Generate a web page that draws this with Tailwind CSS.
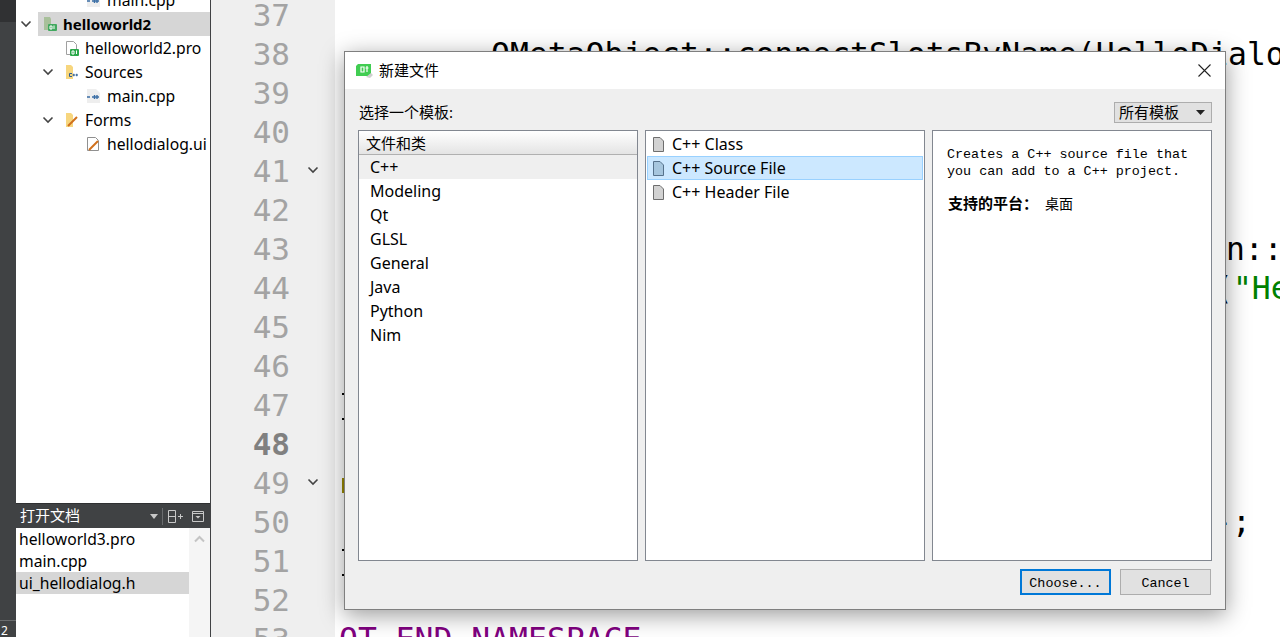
<!DOCTYPE html>
<html lang="en">
<head>
    <meta charset="UTF-8">
    <title>新建文件</title>
    <script src="https://cdn.jsdelivr.net/npm/@tailwindcss/browser@4"></script>
</head>
<body class="bg-white">
<div class="relative flex w-[1280px] h-[637px] overflow-hidden font-['Noto_Sans','Noto_Sans_CJK_SC',sans-serif] text-[15.7px] text-black">

    <!-- Mode bar -->
    <div class="w-4 flex flex-col bg-[#404244]">
        <div class="h-[22px] bg-[#303133]"></div>
        <div class="flex-1"></div>
        <div class="h-[17px] border-t border-[#6a6c6e] pl-[1px] text-[12px] leading-[20px] text-white">2</div>
    </div>

    <!-- Sidebar -->
    <div class="w-[195px] flex flex-col border-r border-[#404244] bg-white">
        <div class="flex-1 -mt-3">
            <div class="h-6 flex items-center pl-[70px]">
                <svg width="14" height="14" viewBox="0 0 14 14" class="mr-[7px]"><path d="M1 0h9l4 4v10H1z" fill="#eeeeee"/><path d="M1 8h3M6 8h7M8.500 6v4M11 6v4" stroke="#3b6ea5" stroke-width="1.400" fill="none"/></svg>
                <span class="pt-px">main.cpp</span>
            </div>
            <div class="h-6 flex items-center">
                <div class="w-[22px] flex justify-center pr-[2px]">
                    <svg width="12" height="8" viewBox="0 0 12 8"><path d="M1.500 1.500 6 6l4.500-4.500" stroke="#444" stroke-width="1.600" fill="none"/></svg>
                </div>
                <div class="flex-1 h-6 flex items-center bg-[#d6d6d6] pl-[5px] font-bold text-[15px]">
                    <svg width="16" height="16" viewBox="0 0 16 16" class="mr-1"><path d="M1 1h6l1 2v11H1z" fill="#a8c09a"/><rect x="5" y="8" width="9" height="7" rx="1" fill="#41a85f"/><path d="M7 10h2v3H7zM11 9.500v3.500" stroke="#fff" stroke-width="1" fill="none"/></svg>
                    <span class="pt-px">helloworld2</span>
                </div>
            </div>
            <div class="h-6 flex items-center pl-[49px]">
                <svg width="14" height="16" viewBox="0 0 14 16" class="mr-1.5"><path d="M1.500 1.500h7l3 3v10h-10z" fill="#fff" stroke="#a0a0a0"/><rect x="5" y="9" width="9" height="7" rx="1" fill="#2ba84a"/><path d="M7 11h2v3H7zM11.500 10.500v3.500" stroke="#fff" stroke-width="1" fill="none"/></svg>
                <span class="pt-px">helloworld2.pro</span>
            </div>
            <div class="h-6 flex items-center pl-[26px]">
                <div class="w-[23px] flex">
                    <svg width="12" height="8" viewBox="0 0 12 8"><path d="M1.500 1.500 6 6l4.500-4.500" stroke="#444" stroke-width="1.600" fill="none"/></svg>
                </div>
                <svg width="14" height="16" viewBox="0 0 14 16" class="mr-1.5"><path d="M1 1h5l2 2v12H1z" fill="#f7d67e"/><path d="M7 9.500H4.500v3H7M7.500 11h2.500M8.750 9.750v2.500M10.500 11H13M11.750 9.750v2.500" stroke="#2f5f96" stroke-width="1" fill="none"/></svg>
                <span class="pt-px">Sources</span>
            </div>
            <div class="h-6 flex items-center pl-[70px]">
                <svg width="14" height="14" viewBox="0 0 14 14" class="mr-[7px]"><path d="M1 0h9l4 4v10H1z" fill="#eeeeee"/><path d="M1 8h3M6 8h7M8.500 6v4M11 6v4" stroke="#3b6ea5" stroke-width="1.400" fill="none"/></svg>
                <span class="pt-px">main.cpp</span>
            </div>
            <div class="h-6 flex items-center pl-[26px]">
                <div class="w-[23px] flex">
                    <svg width="12" height="8" viewBox="0 0 12 8"><path d="M1.500 1.500 6 6l4.500-4.500" stroke="#444" stroke-width="1.600" fill="none"/></svg>
                </div>
                <svg width="14" height="16" viewBox="0 0 14 16" class="mr-1.5"><path d="M1 1h5l2 2v12H1z" fill="#f7d67e"/><path d="M3 14 12 5" stroke="#d0701c" stroke-width="2" fill="none"/></svg>
                <span class="pt-px">Forms</span>
            </div>
            <div class="h-6 flex items-center pl-[70px]">
                <svg width="14" height="16" viewBox="0 0 14 16" class="mr-[7px]"><path d="M1.500 1.500h8l3 3v10h-11z" fill="#fff" stroke="#909090"/><path d="M3 14 12 5" stroke="#d0701c" stroke-width="2" fill="none"/></svg>
                <span class="pt-px">hellodialog.ui</span>
            </div>
        </div>

        <!-- Open documents -->
        <div class="h-[134px] flex flex-col">
            <div class="h-[25px] flex items-center bg-[#404244] border-t border-[#2f3032] pl-1 text-white text-[15px]">
                <span class="flex-1 pb-[2px]">打开文档</span>
                <svg width="8" height="5" viewBox="0 0 8 5" class="mr-[4px]"><path d="M0 0h8L4 5z" fill="#c8c8c8"/></svg>
                <div class="w-px h-[17px] bg-[#6a6c6e] mr-[5px]"></div>
                <svg width="15" height="13" viewBox="0 0 15 13" class="mr-[9px]"><path d="M.5.500h7v12h-7zM.5 6.500h7M10 6.500h5M12.500 4v5" stroke="#c8c8c8" fill="none"/></svg>
                <svg width="12" height="11" viewBox="0 0 12 11" class="mr-[6px]"><path d="M.5.500h11v10H.5zM.5 2.500h11" stroke="#c8c8c8" fill="none"/><path d="M3.500 5h5L6 7.500z" fill="#c8c8c8"/></svg>
            </div>
            <div class="flex-1 flex bg-white">
                <div class="flex-1">
                    <div class="h-[22px] leading-[22px] pl-[3px]">helloworld3.pro</div>
                    <div class="h-[22px] leading-[22px] pl-[3px]">main.cpp</div>
                    <div class="h-[22px] leading-[22px] pl-[3px] bg-[#d6d6d6]">ui_hellodialog.h</div>
                </div>
                <div class="w-[21px] bg-[#f5f5f5] flex justify-center pt-[7px]">
                    <svg width="11" height="8" viewBox="0 0 11 8"><path d="M1 6.500 5.500 2 10 6.500" stroke="#c4c4c4" stroke-width="2" fill="none"/></svg>
                </div>
            </div>
        </div>
    </div>

    <!-- Line numbers -->
    <div class="w-[124px] bg-[#efefef] -mt-1 h-[680px] font-['DejaVu_Sans_Mono',monospace] text-[31px] leading-[39px] text-[#a3a3a3]">
        <div class="h-[39px] flex justify-end"><span>37</span><div class="w-[45px]"></div></div>
        <div class="h-[39px] flex justify-end"><span>38</span><div class="w-[45px]"></div></div>
        <div class="h-[39px] flex justify-end"><span>39</span><div class="w-[45px]"></div></div>
        <div class="h-[39px] flex justify-end"><span>40</span><div class="w-[45px]"></div></div>
        <div class="h-[39px] flex justify-end"><span>41</span><div class="w-[45px] flex items-center justify-center pb-[3px]"><svg width="12" height="8" viewBox="0 0 12 8"><path d="M1.500 1.500 6 6l4.500-4.500" stroke="#444" stroke-width="1.600" fill="none"/></svg></div></div>
        <div class="h-[39px] flex justify-end"><span>42</span><div class="w-[45px]"></div></div>
        <div class="h-[39px] flex justify-end"><span>43</span><div class="w-[45px]"></div></div>
        <div class="h-[39px] flex justify-end"><span>44</span><div class="w-[45px]"></div></div>
        <div class="h-[39px] flex justify-end"><span>45</span><div class="w-[45px]"></div></div>
        <div class="h-[39px] flex justify-end"><span>46</span><div class="w-[45px]"></div></div>
        <div class="h-[39px] flex justify-end"><span>47</span><div class="w-[45px]"></div></div>
        <div class="h-[39px] flex justify-end"><span class="font-bold text-[#808080]">48</span><div class="w-[45px]"></div></div>
        <div class="h-[39px] flex justify-end"><span>49</span><div class="w-[45px] flex items-center justify-center pb-[3px]"><svg width="12" height="8" viewBox="0 0 12 8"><path d="M1.500 1.500 6 6l4.500-4.500" stroke="#444" stroke-width="1.600" fill="none"/></svg></div></div>
        <div class="h-[39px] flex justify-end"><span>50</span><div class="w-[45px]"></div></div>
        <div class="h-[39px] flex justify-end"><span>51</span><div class="w-[45px]"></div></div>
        <div class="h-[39px] flex justify-end"><span>52</span><div class="w-[45px]"></div></div>
        <div class="h-[39px] flex justify-end"><span>53</span><div class="w-[45px]"></div></div>
    </div>

    <!-- Editor -->
    <div class="flex-1 min-w-0 -mt-1 h-[680px] overflow-hidden bg-white font-['DejaVu_Sans_Mono',monospace] text-[31.4px] leading-[39px]">
        <div class="h-[39px]"></div>
        <div class="h-[39px] pl-[156px] whitespace-pre">QMetaObject::connectSlotsByName(HelloDialog);</div>
        <div class="h-[156px]"></div>
        <div class="h-[39px] pl-[872px] whitespace-pre">on::</div>
        <div class="h-[39px] pl-[879px] whitespace-pre">(<span class="text-[#008000]">"Hello</span></div>
        <div class="h-[78px]"></div>
        <div class="h-[39px] pl-[7px] pt-[7px]">
            <div class="w-[2px] h-[2px] bg-black"></div>
            <div class="w-[2px] h-[2px] bg-black mt-[23px]"></div>
        </div>
        <div class="h-[39px]"></div>
        <div class="h-[39px] pl-[7px] pt-[14px]"><div class="w-[3px] h-[15px] bg-[#9b8a00]"></div></div>
        <div class="h-[39px] pl-[878px] whitespace-pre">-;</div>
        <div class="h-[39px] pl-[7px] pt-[7px]">
            <div class="w-[2px] h-[2px] bg-black"></div>
            <div class="w-[2px] h-[2px] bg-black mt-[23px]"></div>
        </div>
        <div class="h-[39px]"></div>
        <div class="h-[39px] pl-[4px] text-[#800080] whitespace-pre">QT_END_NAMESPACE</div>
    </div>

    <!-- New file dialog -->
    <div class="absolute left-[344px] top-[51px] w-[882px] h-[559px] flex flex-col border border-[#7f7f7f] bg-[#efefef] shadow-[0_5px_22px_rgba(0,0,0,0.4)]">
        <div class="h-[37px] flex items-center bg-white pl-[11px] pr-[14px] text-[15px]">
            <svg width="17" height="15" viewBox="0 0 17 15" class="mr-[6px]">
                <path d="M2 1h13v10l-2 2H0V3z" fill="#41cd52"/>
                <path d="M5 4h3v5H5zM11 3v6M9.500 5h3" stroke="#fff" stroke-width="1.200" fill="none"/>
                <path d="M10 14l5-4 2 2-3 3z" fill="#cfcfcf"/>
            </svg>
            <span class="flex-1">新建文件</span>
            <svg width="13" height="13" viewBox="0 0 13 13"><path d="M.5.500l12 12M12.500.500l-12 12" stroke="#222" stroke-width="1.100" fill="none"/></svg>
        </div>
        <div class="flex-1 flex flex-col pt-[13px] pl-[13px] pr-[13px] text-[15px]">
            <div class="h-[21px] flex items-center justify-between">
                <span class="pl-px">选择一个模板:</span>
                <div class="w-[98px] h-[21px] flex items-center justify-between bg-[#e1e1e1] border border-[#adadad] pl-1 pr-[6px]">
                    <span>所有模板</span>
                    <svg width="9" height="5" viewBox="0 0 9 5"><path d="M0 0h9L4.500 5z" fill="#222"/></svg>
                </div>
            </div>
            <div class="mt-[7px] h-[431px] flex gap-[7px]">
                <div class="w-[280px] border border-[#828790] bg-white text-[16px]">
                    <div class="h-6 flex items-center pl-[7px] pt-px text-[15px] bg-gradient-to-b from-white to-[#e4e4e4] border-b border-[#b0b0b0]">文件和类</div>
                    <div class="h-6 flex items-center pl-[11px] bg-[#efefef]">C++</div>
                    <div class="h-6 flex items-center pl-[11px]">Modeling</div>
                    <div class="h-6 flex items-center pl-[11px]">Qt</div>
                    <div class="h-6 flex items-center pl-[11px]">GLSL</div>
                    <div class="h-6 flex items-center pl-[11px]">General</div>
                    <div class="h-6 flex items-center pl-[11px]">Java</div>
                    <div class="h-6 flex items-center pl-[11px]">Python</div>
                    <div class="h-6 flex items-center pl-[11px]">Nim</div>
                </div>
                <div class="w-[280px] border border-[#828790] bg-white pt-px px-px text-[16px]">
                    <div class="h-6 flex items-center pl-[5px] border border-transparent">
                        <svg width="11" height="15" viewBox="0 0 11 15" class="mr-2"><path d="M.5.500h6.500l3.500 3.500v10.500H.5z" fill="#d2d2d2" stroke="#6e6e6e"/></svg>
                        <span>C++ Class</span>
                    </div>
                    <div class="h-6 flex items-center pl-[5px] border border-[#99d1ff] bg-[#cce8ff]">
                        <svg width="11" height="15" viewBox="0 0 11 15" class="mr-2"><path d="M.5.500h6.500l3.500 3.500v10.500H.5z" fill="#a6c6de" stroke="#56728c"/></svg>
                        <span>C++ Source File</span>
                    </div>
                    <div class="h-6 flex items-center pl-[5px] border border-transparent">
                        <svg width="11" height="15" viewBox="0 0 11 15" class="mr-2"><path d="M.5.500h6.500l3.500 3.500v10.500H.5z" fill="#d2d2d2" stroke="#6e6e6e"/></svg>
                        <span>C++ Header File</span>
                    </div>
                </div>
                <div class="w-[280px] border border-[#828790] bg-white pt-[15px] pl-[14px] font-['Liberation_Mono','Noto_Sans_CJK_SC',monospace] text-[13.4px] leading-[17px]">
                    <div class="whitespace-pre">Creates a C++ source file that</div>
                    <div class="whitespace-pre">you can add to a C++ project.</div>
                    <div class="mt-[17px] pl-px text-[15px]"><span class="font-bold">支持的平台：</span><span class="ml-[7px] text-[14px]">桌面</span></div>
                </div>
            </div>
            <div class="mt-2 flex justify-end gap-[9px] pr-px font-['Liberation_Mono',monospace] text-[13.4px]">
                <div class="w-[91px] h-[26px] flex items-center justify-center pt-[4px] bg-[#e1e1e1] border-2 border-[#0078d7]">Choose...</div>
                <div class="w-[91px] h-[26px] flex items-center justify-center pt-[4px] bg-[#e1e1e1] border border-[#adadad]">Cancel</div>
            </div>
        </div>
    </div>
</div>
</body>
</html>
